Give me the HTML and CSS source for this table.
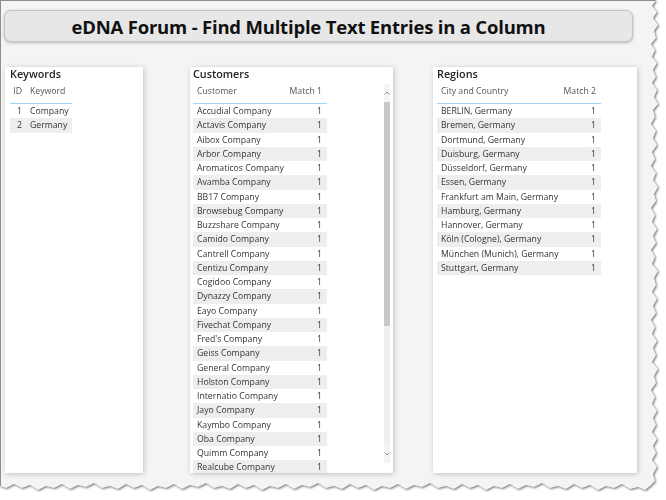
FILE: index.html
```html
<!DOCTYPE html>
<html>
<head>
<meta charset="utf-8">
<link rel="stylesheet" href="styles.css">
</head>
<body>
<div class="shot">
  <div class="page">
    <div class="titlebar">eDNA Forum - Find Multiple Text Entries in a Column</div>
    <div class="panels">
      <section class="panel kw">
        <h2 class="ptitle">Keywords</h2>
        <div class="tbl kwtbl">
          <div class="hdr"><span class="c-id">ID</span><span class="c-kw">Keyword</span></div>
          <div class="row"><span class="c-id">1</span><span class="c-kw">Company</span></div>
          <div class="row alt"><span class="c-id">2</span><span class="c-kw">Germany</span></div>
        </div>
      </section>

      <section class="panel cu">
        <h2 class="ptitle">Customers</h2>
        <div class="body">
          <div class="tbl cutbl">
            <div class="hdr"><span class="c-name">Customer</span><span class="c-num">Match 1</span></div>
            <div class="row"><span class="c-name">Accudial Company</span><span class="c-num">1</span></div>
            <div class="row alt"><span class="c-name">Actavis Company</span><span class="c-num">1</span></div>
            <div class="row"><span class="c-name">Aibox Company</span><span class="c-num">1</span></div>
            <div class="row alt"><span class="c-name">Arbor Company</span><span class="c-num">1</span></div>
            <div class="row"><span class="c-name">Aromaticos Company</span><span class="c-num">1</span></div>
            <div class="row alt"><span class="c-name">Avamba Company</span><span class="c-num">1</span></div>
            <div class="row"><span class="c-name">BB17 Company</span><span class="c-num">1</span></div>
            <div class="row alt"><span class="c-name">Browsebug Company</span><span class="c-num">1</span></div>
            <div class="row"><span class="c-name">Buzzshare Company</span><span class="c-num">1</span></div>
            <div class="row alt"><span class="c-name">Camido Company</span><span class="c-num">1</span></div>
            <div class="row"><span class="c-name">Cantrell Company</span><span class="c-num">1</span></div>
            <div class="row alt"><span class="c-name">Centizu Company</span><span class="c-num">1</span></div>
            <div class="row"><span class="c-name">Cogidoo Company</span><span class="c-num">1</span></div>
            <div class="row alt"><span class="c-name">Dynazzy Company</span><span class="c-num">1</span></div>
            <div class="row"><span class="c-name">Eayo Company</span><span class="c-num">1</span></div>
            <div class="row alt"><span class="c-name">Fivechat Company</span><span class="c-num">1</span></div>
            <div class="row"><span class="c-name">Fred's Company</span><span class="c-num">1</span></div>
            <div class="row alt"><span class="c-name">Geiss Company</span><span class="c-num">1</span></div>
            <div class="row"><span class="c-name">General Company</span><span class="c-num">1</span></div>
            <div class="row alt"><span class="c-name">Holston Company</span><span class="c-num">1</span></div>
            <div class="row"><span class="c-name">Internatio Company</span><span class="c-num">1</span></div>
            <div class="row alt"><span class="c-name">Jayo Company</span><span class="c-num">1</span></div>
            <div class="row"><span class="c-name">Kaymbo Company</span><span class="c-num">1</span></div>
            <div class="row alt"><span class="c-name">Oba Company</span><span class="c-num">1</span></div>
            <div class="row"><span class="c-name">Quimm Company</span><span class="c-num">1</span></div>
            <div class="row alt"><span class="c-name">Realcube Company</span><span class="c-num">1</span></div>
          </div>
          <div class="scrollbar">
            <div class="sb-btn"><svg width="6" height="4" viewBox="0 0 6 4"><path d="M0.5 3.5 L3 1 L5.5 3.5" fill="none" stroke="#8a8a8a" stroke-width="0.9"/></svg></div>
            <div class="sb-track"><div class="sb-thumb"></div></div>
            <div class="sb-btn"><svg width="6" height="4" viewBox="0 0 6 4"><path d="M0.5 0.5 L3 3 L5.5 0.5" fill="none" stroke="#8a8a8a" stroke-width="0.9"/></svg></div>
          </div>
        </div>
      </section>

      <section class="panel re">
        <h2 class="ptitle">Regions</h2>
        <div class="tbl retbl">
          <div class="hdr"><span class="c-name">City and Country</span><span class="c-num">Match 2</span></div>
          <div class="row"><span class="c-name">BERLIN, Germany</span><span class="c-num">1</span></div>
          <div class="row alt"><span class="c-name">Bremen, Germany</span><span class="c-num">1</span></div>
          <div class="row"><span class="c-name">Dortmund, Germany</span><span class="c-num">1</span></div>
          <div class="row alt"><span class="c-name">Duisburg, Germany</span><span class="c-num">1</span></div>
          <div class="row"><span class="c-name">Düsseldorf, Germany</span><span class="c-num">1</span></div>
          <div class="row alt"><span class="c-name">Essen, Germany</span><span class="c-num">1</span></div>
          <div class="row"><span class="c-name">Frankfurt am Main, Germany</span><span class="c-num">1</span></div>
          <div class="row alt"><span class="c-name">Hamburg, Germany</span><span class="c-num">1</span></div>
          <div class="row"><span class="c-name">Hannover, Germany</span><span class="c-num">1</span></div>
          <div class="row alt"><span class="c-name">Köln (Cologne), Germany</span><span class="c-num">1</span></div>
          <div class="row"><span class="c-name">München (Munich), Germany</span><span class="c-num">1</span></div>
          <div class="row alt"><span class="c-name">Stuttgart, Germany</span><span class="c-num">1</span></div>
        </div>
      </section>
    </div>
  </div>
</div>
</body>
</html>
```

FILE: styles.css
```css
* { box-sizing: border-box; }
html, body { margin: 0; padding: 0; background: #ffffff; }
body { width: 666px; height: 500px; overflow: hidden; font-family: "Open Sans", "Noto Sans", sans-serif; }

.shot {
  width: 662px;
  height: 494px;
  filter: drop-shadow(1px 1.5px 1px rgba(0,0,0,0.55));
}
.page {
  width: 662px;
  height: 494px;
  background: #f4f4f4;
  box-shadow: inset 1px 1px 0 #8e8e8e;
  display: flex;
  flex-direction: column;
  clip-path: polygon(0 0, 656px 0, 652px 6px, 657px 12px, 653px 18px, 658px 25px, 654px 31px, 656px 38px, 651px 44px, 655px 50px, 652px 57px, 657px 63px, 653px 70px, 656px 77px, 652px 83px, 657px 90px, 654px 97px, 658px 104px, 653px 110px, 655px 117px, 651px 124px, 656px 131px, 653px 138px, 657px 145px, 652px 152px, 655px 159px, 651px 166px, 656px 173px, 653px 180px, 658px 187px, 654px 194px, 656px 201px, 651px 208px, 655px 215px, 652px 222px, 657px 229px, 653px 236px, 656px 243px, 651px 250px, 655px 257px, 652px 264px, 658px 271px, 654px 278px, 656px 285px, 652px 292px, 657px 299px, 653px 306px, 656px 313px, 651px 320px, 655px 327px, 652px 334px, 657px 341px, 653px 348px, 656px 355px, 652px 362px, 658px 369px, 654px 376px, 656px 383px, 651px 390px, 655px 397px, 652px 404px, 657px 411px, 653px 418px, 656px 425px, 652px 432px, 657px 439px, 653px 446px, 656px 453px, 652px 460px, 657px 467px, 653px 474px, 655px 481px, 650px 486px, 645px 490px, 638px 487px, 630px 489px, 622px 484px, 614px 488px, 606px 486px, 598px 490px, 590px 485px, 582px 488px, 574px 484px, 566px 489px, 558px 486px, 550px 488px, 542px 483px, 534px 487px, 526px 485px, 518px 489px, 510px 484px, 502px 488px, 494px 486px, 486px 490px, 478px 485px, 470px 488px, 462px 484px, 454px 489px, 446px 486px, 438px 488px, 430px 483px, 422px 487px, 414px 485px, 406px 489px, 398px 484px, 390px 488px, 382px 486px, 374px 490px, 366px 485px, 358px 488px, 350px 484px, 342px 489px, 334px 486px, 326px 488px, 318px 483px, 310px 487px, 302px 485px, 294px 489px, 286px 484px, 278px 488px, 270px 486px, 262px 490px, 254px 485px, 246px 488px, 238px 484px, 230px 489px, 222px 486px, 214px 488px, 206px 483px, 198px 487px, 190px 485px, 182px 489px, 174px 484px, 166px 488px, 158px 486px, 150px 490px, 142px 485px, 134px 488px, 126px 484px, 118px 489px, 110px 486px, 102px 488px, 94px 483px, 86px 487px, 78px 485px, 70px 489px, 62px 484px, 54px 488px, 46px 486px, 38px 490px, 30px 485px, 22px 488px, 14px 484px, 6px 488px, 0 486px);
}

.titlebar {
  margin: 10px 0 0 4px;
  width: 629px;
  height: 32px;
  background: #e7e7e7;
  border: 1px solid #c4c4c4;
  border-radius: 7px;
  box-shadow: 0 1px 3px rgba(0,0,0,0.25);
  display: flex;
  align-items: center;
  justify-content: center;
  font-weight: 700;
  font-size: 18.5px;
  color: #111;
  letter-spacing: -0.2px;
  padding-right: 20px;
}

.panels {
  display: flex;
  margin-top: 25px;
  padding-left: 5px;
  align-items: flex-start;
}
.panel {
  height: 406px;
  background: #ffffff;
  box-shadow: 1px 1px 5px rgba(0,0,0,0.22);
  padding: 1px 0 0 5px;
  overflow: hidden;
}
.kw { width: 138px; }
.cu { width: 203px; margin-left: 47px; padding-left: 3px; }
.re { width: 204px; margin-left: 40px; padding-left: 4px; }

.ptitle {
  margin: 0;
  font-size: 10.8px;
  font-weight: 600;
  line-height: 12px;
  color: #252423;
}

.tbl { font-size: 8.7px; color: #333; }
.hdr {
  display: flex;
  height: 24px;
  padding-top: 4px;
  border-bottom: 1.5px solid #a6d3f2;
  color: #555;
  line-height: 14px;
}
.row {
  display: flex;
  height: 14.25px;
  line-height: 14.25px;
  color: #333;
  white-space: nowrap;
}
.row.alt { background: #eeeeee; }

.kwtbl { width: 62px; }
.c-id { width: 12px; text-align: right; }
.c-kw { padding-left: 8px; }

.c-name { flex: 1; padding-left: 4px; }
.c-num { padding-right: 5px; text-align: right; }

.body { display: flex; align-items: flex-start; }
.cutbl { width: 134px; flex: none; }
.retbl { width: 164px; }

.scrollbar {
  margin-left: 57px;
  margin-top: 4px;
  width: 6px;
  height: 379px;
  display: flex;
  flex-direction: column;
  background: #f0f0f0;
}
.sb-btn {
  height: 18px;
  display: flex;
  align-items: center;
  justify-content: center;
  background: #f4f4f4;
}
.sb-track { flex: 1; display: flex; flex-direction: column; }
.sb-thumb { height: 224px; background: #c8c8c8; }
```
